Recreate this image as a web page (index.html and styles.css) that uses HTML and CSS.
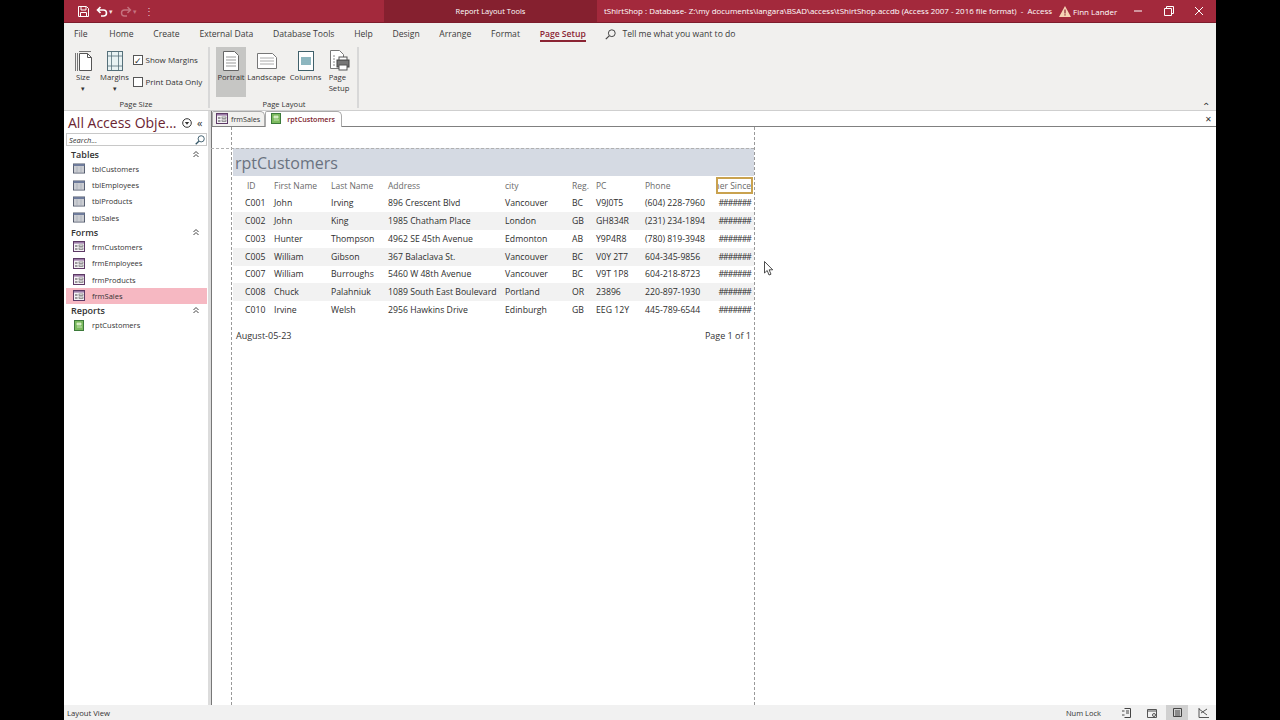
FILE: index.html
```html
<!DOCTYPE html>
<html lang="en">
<head>
<meta charset="UTF-8">
<title>tShirtShop : Database - Access</title>
<link rel="stylesheet" href="styles.css">
</head>
<body>

<svg class="defs" width="0" height="0">
    <symbol id="ico-table" viewBox="0 0 12 10">
        <rect x="0.5" y="0.5" width="11" height="9" fill="#fff" stroke="#50586a"/>
        <path d="M0 3.5h12M0 5.500h12M0 7.500h12" stroke="#6a7080" stroke-width="0.7"/>
        <path d="M4 3v7M8 3v7" stroke="#a0a6b4" stroke-width="0.6"/>
        <rect x="0.5" y="0.5" width="11" height="2" fill="#6f7c9c"/>
    </symbol>
    <symbol id="ico-form" viewBox="0 0 12 11">
        <rect x="0.5" y="0.5" width="11" height="10" fill="#f4f1f5" stroke="#5d3a66"/>
        <rect x="1" y="1" width="10" height="1.6" fill="#9a7aa6"/>
        <path d="M2 5h2.5M2 8h2.5" stroke="#444" stroke-width="1"/>
        <rect x="6" y="4" width="4" height="1.6" fill="#fff" stroke="#555" stroke-width="0.6"/>
        <rect x="6" y="7" width="4" height="1.6" fill="#fff" stroke="#555" stroke-width="0.6"/>
    </symbol>
    <symbol id="ico-report" viewBox="0 0 10 11">
        <rect x="0.5" y="0.5" width="9" height="10" fill="#7dbb5f" stroke="#3c7a3a"/>
        <path d="M3 3h4v2H3zM3 7h5" fill="#c9e7b4" stroke="#e2f2d5" stroke-width="0.7"/>
    </symbol>
    <symbol id="ico-collapse" viewBox="0 0 8 8">
        <path d="M1.5 4 4 1.5 6.5 4M1.5 7 4 4.5 6.5 7" fill="none" stroke="#444" stroke-width="1"/>
    </symbol>
</svg>

<div class="app">

    <div class="titlebar">
        <div class="quick">
            <svg class="q-save" width="11" height="11" viewBox="0 0 11 11"><path d="M.5.5h8l2 2v8H.5z" fill="none" stroke="#fff"/><path d="M3 1v3h5V1M2.5 10V6.5h6V10" fill="none" stroke="#fff"/></svg>
            <svg class="q-undo" width="12" height="11" viewBox="0 0 12 11"><path d="M4.5 1 1.5 4l3 3M2 4h5.5a3 3 0 0 1 0 6H5" fill="none" stroke="#fff" stroke-width="1.6"/></svg>
            <span class="q-caret">▾</span>
            <svg class="q-redo" width="12" height="11" viewBox="0 0 12 11"><path d="M7.5 1l3 3-3 3M10 4H4.5a3 3 0 0 0 0 6H7" fill="none" stroke="#c5737f" stroke-width="1.4"/></svg>
            <span class="q-caret q-dim">▾</span>
            <span class="q-more">⋮</span>
        </div>
        <div class="tools-title">Report Layout Tools</div>
        <div class="doc-title">tShirtShop : Database- Z:\my documents\langara\BSAD\access\tShirtShop.accdb (Access 2007 - 2016 file format)&nbsp; -&nbsp; Access</div>
        <div class="user">
            <svg width="12" height="11" viewBox="0 0 12 11"><path d="M6 0 12 11H0z" fill="#f6d3b5"/><path d="M6 3.5v4M6 8.3v1.3" stroke="#8b2433" stroke-width="1.2"/></svg>
            <span>Finn Lander</span>
        </div>
        <div class="win-btns">
            <svg width="10" height="10" viewBox="0 0 10 10"><path d="M1 5h8" stroke="#fff"/></svg>
            <svg width="10" height="10" viewBox="0 0 10 10"><path d="M.5 2.5h7v7h-7zM2.5 2.5v-2h7v7h-2" fill="none" stroke="#fff"/></svg>
            <svg width="10" height="10" viewBox="0 0 10 10"><path d="M1 1l8 8M9 1 1 9" stroke="#fff"/></svg>
        </div>
    </div>

    <div class="tabs">
        <span class="tab tab-file">File</span>
        <span class="tab">Home</span>
        <span class="tab">Create</span>
        <span class="tab">External Data</span>
        <span class="tab">Database Tools</span>
        <span class="tab">Help</span>
        <span class="tab">Design</span>
        <span class="tab">Arrange</span>
        <span class="tab">Format</span>
        <span class="tab active">Page Setup</span>
        <span class="tell">
            <svg width="11" height="11" viewBox="0 0 11 11"><circle cx="6.8" cy="4.2" r="3.4" fill="none" stroke="#444"/><path d="M4.2 6.8 .8 10.2" stroke="#444" stroke-width="1.2"/></svg>
            Tell me what you want to do
        </span>
    </div>

    <div class="ribbon">
        <div class="group group-size">
            <div class="group-body">
                <div class="big big-size">
                    <svg width="17" height="20" viewBox="0 0 17 20"><path d="M4.500 2.500h8l4 4v13h-12z" fill="#fff" stroke="#555"/><path d="M12.500 2.500v4h4" fill="none" stroke="#555"/><path d="M.5 2v18M2.500 2v18M4 .5h12" stroke="#555" stroke-width="0.8" fill="none"/></svg>
                    <span>Size</span>
                    <i class="caret">▾</i>
                </div>
                <div class="big big-margins">
                    <svg width="16" height="20" viewBox="0 0 16 20"><rect x="0.5" y="0.5" width="15" height="19" fill="#e8f2f3" stroke="#55707a"/><path d="M4.500 0v20M11.500 0v20M0 5h16M0 15h16" stroke="#55707a" stroke-width="0.8"/></svg>
                    <span>Margins</span>
                    <i class="caret">▾</i>
                </div>
                <div class="checks">
                    <label class="check"><b class="box on">✓</b>Show Margins</label>
                    <label class="check"><b class="box"></b>Print Data Only</label>
                </div>
            </div>
            <div class="group-label">Page Size</div>
        </div>
        <div class="group group-layout">
            <div class="group-body">
                <div class="big big-portrait selected">
                    <svg width="16" height="20" viewBox="0 0 16 20"><path d="M.5.5h11l4 4v15H.5z" fill="#fff" stroke="#666"/><path d="M3 6h10M3 9h10M3 12h10M3 15h10" stroke="#999"/></svg>
                    <span>Portrait</span>
                </div>
                <div class="big big-landscape">
                    <svg width="20" height="16" viewBox="0 0 20 16"><path d="M.5.5h15l4 4v11H.5z" fill="#fff" stroke="#777"/><path d="M3 5h14M3 8h14M3 11h14" stroke="#aaa"/></svg>
                    <span>Landscape</span>
                </div>
                <div class="big big-columns">
                    <svg width="16" height="20" viewBox="0 0 16 20"><rect x="0.5" y="0.5" width="15" height="19" fill="#fff" stroke="#40606a"/><path d="M3 7h10M3 9h10M3 11h10M3 13h10" stroke="#1c6f80"/></svg>
                    <span>Columns</span>
                </div>
                <div class="big big-setup">
                    <svg width="21" height="22" viewBox="0 0 21 22"><path d="M1.500.5h9l4 4v14h-13z" fill="#fff" stroke="#777"/><path d="M4 6h2M4 9h2M4 12h2M4 15h2" stroke="#888"/><rect x="8" y="10" width="12" height="7" fill="#777" stroke="#444"/><rect x="10" y="7" width="8" height="3" fill="#fff" stroke="#555"/><rect x="10" y="15" width="8" height="5" fill="#fff" stroke="#555"/></svg>
                    <span>Page<br>Setup</span>
                </div>
            </div>
            <div class="group-label">Page Layout</div>
        </div>
        <div class="ribbon-pin">⌃</div>
    </div>

    <div class="workspace">
        <nav class="nav">
            <div class="nav-head">
                <span class="nav-title">All Access Obje...</span>
                <svg width="10" height="10" viewBox="0 0 10 10"><circle cx="5" cy="5" r="4.3" fill="none" stroke="#333"/><path d="M2.8 4h4.400L5 6.700z" fill="#333"/></svg>
                <span class="nav-hide">«</span>
            </div>
            <div class="nav-search">
                <span>Search...</span>
                <svg width="10" height="10" viewBox="0 0 11 11"><circle cx="6.800" cy="4.200" r="3.400" fill="none" stroke="#356"/><path d="M4.200 6.800 .8 10.200" stroke="#356" stroke-width="1.400"/></svg>
            </div>
            <div class="nav-group">Tables<svg width="8" height="8"><use href="#ico-collapse"/></svg></div>
            <div class="nav-item"><svg class="ico-t"><use href="#ico-table"/></svg>tblCustomers</div>
            <div class="nav-item"><svg class="ico-t"><use href="#ico-table"/></svg>tblEmployees</div>
            <div class="nav-item"><svg class="ico-t"><use href="#ico-table"/></svg>tblProducts</div>
            <div class="nav-item"><svg class="ico-t"><use href="#ico-table"/></svg>tblSales</div>
            <div class="nav-group">Forms<svg width="8" height="8"><use href="#ico-collapse"/></svg></div>
            <div class="nav-item"><svg class="ico-t"><use href="#ico-form"/></svg>frmCustomers</div>
            <div class="nav-item"><svg class="ico-t"><use href="#ico-form"/></svg>frmEmployees</div>
            <div class="nav-item"><svg class="ico-t"><use href="#ico-form"/></svg>frmProducts</div>
            <div class="nav-item current"><svg class="ico-t"><use href="#ico-form"/></svg>frmSales</div>
            <div class="nav-group">Reports<svg width="8" height="8"><use href="#ico-collapse"/></svg></div>
            <div class="nav-item"><svg class="ico-t"><use href="#ico-report"/></svg>rptCustomers</div>
        </nav>

        <main class="main">
            <div class="doc-tabs">
                <div class="doc-tab"><svg class="ico-t"><use href="#ico-form"/></svg>frmSales</div>
                <div class="doc-tab open"><svg class="ico-t"><use href="#ico-report"/></svg>rptCustomers</div>
                <span class="doc-close">✕</span>
            </div>
            <div class="canvas">
                <div class="page">
                    <div class="rpt-title">rptCustomers</div>
                    <div class="row head">
                        <span class="c-id">ID</span><span class="c-first">First Name</span><span class="c-last">Last Name</span><span class="c-addr">Address</span><span class="c-city">city</span><span class="c-reg">Reg.</span><span class="c-pc">PC</span><span class="c-phone">Phone</span><span class="c-since picked"><em>Customer Since</em></span>
                    </div>
                    <div class="row">
                        <span class="c-id">C001</span><span class="c-first">John</span><span class="c-last">Irving</span><span class="c-addr">896 Crescent Blvd</span><span class="c-city">Vancouver</span><span class="c-reg">BC</span><span class="c-pc">V9J0T5</span><span class="c-phone">(604) 228-7960</span><span class="c-since">#######</span>
                    </div>
                    <div class="row">
                        <span class="c-id">C002</span><span class="c-first">John</span><span class="c-last">King</span><span class="c-addr">1985 Chatham Place</span><span class="c-city">London</span><span class="c-reg">GB</span><span class="c-pc">GH834R</span><span class="c-phone">(231) 234-1894</span><span class="c-since">#######</span>
                    </div>
                    <div class="row">
                        <span class="c-id">C003</span><span class="c-first">Hunter</span><span class="c-last">Thompson</span><span class="c-addr">4962 SE 45th Avenue</span><span class="c-city">Edmonton</span><span class="c-reg">AB</span><span class="c-pc">Y9P4R8</span><span class="c-phone">(780) 819-3948</span><span class="c-since">#######</span>
                    </div>
                    <div class="row">
                        <span class="c-id">C005</span><span class="c-first">William</span><span class="c-last">Gibson</span><span class="c-addr">367 Balaclava St.</span><span class="c-city">Vancouver</span><span class="c-reg">BC</span><span class="c-pc">V0Y 2T7</span><span class="c-phone">604-345-9856</span><span class="c-since">#######</span>
                    </div>
                    <div class="row">
                        <span class="c-id">C007</span><span class="c-first">William</span><span class="c-last">Burroughs</span><span class="c-addr">5460 W 48th Avenue</span><span class="c-city">Vancouver</span><span class="c-reg">BC</span><span class="c-pc">V9T 1P8</span><span class="c-phone">604-218-8723</span><span class="c-since">#######</span>
                    </div>
                    <div class="row">
                        <span class="c-id">C008</span><span class="c-first">Chuck</span><span class="c-last">Palahniuk</span><span class="c-addr">1089 South East Boulevard</span><span class="c-city">Portland</span><span class="c-reg">OR</span><span class="c-pc">23896</span><span class="c-phone">220-897-1930</span><span class="c-since">#######</span>
                    </div>
                    <div class="row">
                        <span class="c-id">C010</span><span class="c-first">Irvine</span><span class="c-last">Welsh</span><span class="c-addr">2956 Hawkins Drive</span><span class="c-city">Edinburgh</span><span class="c-reg">GB</span><span class="c-pc">EEG 12Y</span><span class="c-phone">445-789-6544</span><span class="c-since">#######</span>
                    </div>
                    <div class="rpt-foot">
                        <span>August-05-23</span>
                        <span>Page 1 of 1</span>
                    </div>
                </div>
                <svg class="cursor" width="10" height="15" viewBox="0 0 10 15"><path d="M.5.500v11.500l2.700-2.500 1.800 4.500 2-.8-1.900-4.400h3.600z" fill="#fff" stroke="#222" stroke-width="0.8"/></svg>
            </div>
        </main>
    </div>

    <div class="statusbar">
        <span>Layout View</span>
        <div class="status-right">
            <span class="numlock">Num Lock</span>
            <svg class="view" width="9" height="10" viewBox="0 0 9 10"><path d="M2.500.5h6v9h-6M0 3h2.500M0 7h2.500M4 3h3M4 5h3" fill="none" stroke="#444"/></svg>
            <svg class="view" width="11" height="10" viewBox="0 0 11 10"><path d="M.5 1.500h9v8h-9zM.5 3h9" fill="none" stroke="#555"/><circle cx="7" cy="7" r="1.500" fill="none" stroke="#555"/></svg>
            <span class="view-on"><svg width="9" height="9" viewBox="0 0 9 9"><path d="M.5.500h8v8h-8zM2 3h5M2 5h5M2 7h5" fill="none" stroke="#444"/></svg></span>
            <svg class="view view-last" width="11" height="10" viewBox="0 0 11 10"><path d="M1 0v9.500h10M1 1l8 6M3 5 9 1" fill="none" stroke="#555"/></svg>
        </div>
    </div>
</div>

</body>
</html>
```

FILE: styles.css
```css
* {
    box-sizing: border-box;
}

html, body {
    margin: 0;
    height: 100%;
    background: #000;
    overflow: hidden;
}

body {
    font-family: "Open Sans", "Noto Sans", sans-serif;
    font-size: 9px;
    color: #333;
}

.defs {
    position: absolute;
}

.app {
    width: 1152px;
    height: 720px;
    margin: 0 auto;
    background: #f1f0ee;
    display: flex;
    flex-direction: column;
}

/* title bar */
.titlebar {
    height: 23px;
    flex: none;
    display: flex;
    align-items: center;
    background: #a3293c;
    border-bottom: 1px solid #7d1c2c;
    color: #fff;
    padding-left: 14px;
}

.quick {
    width: 306px;
    display: flex;
    align-items: center;
}

.q-undo { margin-left: 7px; }
.q-redo { margin-left: 7px; }
.q-caret { font-size: 7px; margin-left: 1px; color: #f3dfe2; }
.q-dim { color: #c5737f; }
.q-more { margin-left: 7px; color: #e8c0c6; font-size: 10px; }

.tools-title {
    width: 213px;
    align-self: stretch;
    background: #85202f;
    display: flex;
    align-items: center;
    justify-content: center;
    font-size: 7.500px;
    margin-right: 7px;
}

.doc-title {
    width: 445px;
    font-size: 7.950px;
    white-space: nowrap;
}

.user {
    margin-left: 10px;
    width: 70px;
    display: flex;
    align-items: center;
    gap: 2px;
    font-size: 8px;
}

.win-btns {
    width: 80px;
    display: flex;
    justify-content: space-between;
    padding-right: 5px;
    padding-left: 4px;
}

/* ribbon tabs */
.tabs {
    height: 22px;
    flex: none;
    display: flex;
    align-items: center;
    gap: 19.700px;
    padding-left: 10px;
    font-size: 8.600px;
    color: #3a3a3a;
}

.tab {
    white-space: nowrap;
}

.tab-file {
    margin-right: 2px;
}

.tab.active {
    color: #8b2433;
    font-weight: 600;
    border-bottom: 2px solid #8b2433;
    line-height: 12px;
    margin-top: 2px;
}

.tell {
    display: flex;
    align-items: center;
    gap: 6px;
}

/* ribbon */
.ribbon {
    height: 66px;
    flex: none;
    display: flex;
    border-bottom: 1px solid #cfcfcf;
    position: relative;
}

.group {
    display: flex;
    flex-direction: column;
    border-right: 2px solid #d8d8d8;
    margin: 2px 0 2px;
}

.group-size { width: 146px; }
.group-layout { width: 149px; padding-left: 6px; }

.group-body {
    flex: 1;
    display: flex;
}

.group-label {
    height: 13px;
    text-align: center;
    font-size: 7.600px;
    line-height: 15px;
}

.group-layout .group-label {
    margin-right: 5px;
}

.big {
    display: flex;
    flex-direction: column;
    align-items: center;
    font-size: 7.700px;
    line-height: 11px;
    height: 50px;
    white-space: nowrap;
}

.big svg {
    height: 22px;
    margin-top: 3px;
    flex: none;
}

.caret {
    font-style: normal;
    font-size: 7px;
    line-height: 11px;
}

.big-size { width: 24px; margin-left: 7px; }
.big-margins { width: 32px; margin-left: 3.500px; }

.checks {
    display: flex;
    flex-direction: column;
    gap: 9px;
    padding: 6px 0 0 2px;
}

.check {
    display: flex;
    align-items: center;
    gap: 3px;
    font-size: 8px;
    height: 13px;
    white-space: nowrap;
}

.box {
    width: 10px;
    height: 10px;
    border: 1px solid #555;
    background: #fff;
    font-size: 9px;
    font-weight: 400;
    line-height: 9px;
    text-align: center;
}

.big-portrait { width: 30px; }
.big-landscape { width: 41px; }
.big-columns { width: 37px; }
.big-setup { width: 30px; }
.selected { background: #c6c6c4; }

.ribbon-pin {
    position: absolute;
    right: 6px;
    bottom: -3px;
    font-size: 10px;
}

/* navigation pane */
.workspace {
    flex: 1;
    min-height: 0;
    display: flex;
    background: #fff;
}

.nav {
    width: 147px;
    flex: none;
    background: #fff;
    border-right: 3px solid #dcdcdc;
    box-shadow: 1px 0 0 #777;
    padding: 1px 1px 0 2px;
}

.nav-head {
    height: 21px;
    display: flex;
    align-items: center;
    padding-left: 2px;
}

.nav-title {
    font-size: 14px;
    width: 114px;
    color: #6b2431;
    white-space: nowrap;
}

.nav-hide {
    margin-left: 5px;
    font-size: 11px;
}

.nav-search {
    height: 13px;
    display: flex;
    align-items: center;
    justify-content: space-between;
    border: 1px solid #c8c8c8;
    font-style: italic;
    font-size: 7.500px;
    padding: 0 1px 0 2px;
    margin-bottom: 1.600px;
}

.nav-group {
    height: 13px;
    display: flex;
    align-items: center;
    justify-content: space-between;
    padding: 0 7px 0 5px;
    font-weight: 600;
    font-size: 9px;
}

.nav-item {
    height: 16.300px;
    display: flex;
    align-items: center;
    gap: 7px;
    padding-left: 7px;
    font-size: 7.500px;
}

.ico-t {
    width: 12px;
    height: 11px;
    flex: none;
}

.nav-item.current {
    background: #f6b8c2;
}

/* document area */
.main {
    flex: 1;
    min-width: 0;
    display: flex;
    flex-direction: column;
}

.doc-tabs {
    height: 16px;
    flex: none;
    display: flex;
    align-items: flex-end;
    border-bottom: 1px solid #808080;
    padding-left: 1px;
    position: relative;
    font-size: 7.200px;
}

.doc-tab {
    height: 15px;
    display: flex;
    align-items: center;
    gap: 3px;
    padding: 0 4px 1px 3px;
    background: #f1f0ee;
    border: 1px solid #aaa;
    border-bottom: none;
    border-radius: 2px 5px 0 0;
}

.doc-tab.open {
    color: #7d1c2c;
    font-weight: 600;
    background: #fff;
    height: 16px;
    margin-bottom: -1px;
    gap: 5px;
    padding: 0 6px 2px 4px;
}

.doc-close {
    position: absolute;
    right: 4px;
    top: 2px;
    font-size: 8px;
}

.canvas {
    flex: 1;
    min-height: 0;
    padding-left: 20px;
    position: relative;
}

.page {
    width: 524px;
    height: 100%;
    padding-top: 21px;
    border-left: 1px dashed #999;
    border-right: 1px dashed #999;
    position: relative;
}

.page::before {
    content: "";
    position: absolute;
    left: -21px;
    right: 0;
    top: 21px;
    border-top: 1px dashed #b0b0b0;
}

.rpt-title {
    height: 28px;
    margin-left: 1px;
    padding-left: 2px;
    background: #d5dae3;
    color: #6a7280;
    font-size: 16px;
    line-height: 30px;
}

.row {
    height: 17.850px;
    display: flex;
    align-items: center;
    margin-left: 1px;
    font-size: 8.700px;
    color: #2e2e2e;
    white-space: nowrap;
}

.row:nth-of-type(even) {
    background: #f2f2f2;
}

.row.head {
    height: 18.200px;
    color: #6a6a6a;
    background: none;
    font-size: 8.500px;
}

.row span {
    display: block;
}

.c-id { width: 41px; padding-left: 12px; }
.c-first { width: 57px; }
.c-last { width: 57px; }
.c-addr { width: 117px; }
.c-city { width: 67px; }
.c-reg { width: 24px; }
.c-pc { width: 49px; }
.c-phone { width: 71px; }
.c-since {
    width: 37px;
    overflow: hidden;
    text-align: right;
    padding-right: 2px;
    font-size: 8.600px;
    letter-spacing: -0.900px;
}

.head .c-id { padding-left: 14px; }

.picked {
    height: 17px;
    border: 2px solid #c9a24f;
    padding-right: 0;
    font-size: 8.500px;
    letter-spacing: 0;
    display: flex !important;
    justify-content: flex-end;
    align-items: center;
}

.picked em {
    font-style: normal;
    flex: none;
}

.rpt-foot {
    display: flex;
    justify-content: space-between;
    padding: 10px 3px 0 4px;
    font-size: 9px;
}

.cursor {
    position: absolute;
    left: 553px;
    top: 134px;
}

/* status bar */
.statusbar {
    height: 15px;
    flex: none;
    display: flex;
    justify-content: space-between;
    align-items: center;
    background: #f1f1f1;
    padding-left: 3px;
    font-size: 7.700px;
}

.status-right {
    display: flex;
    align-items: center;
    height: 100%;
}

.numlock { margin-right: 21px; font-size: 7.500px; }
.view { margin-right: 16px; }
.view-last { margin-right: 7px; }

.view-on {
    width: 22px;
    height: 100%;
    background: #d0d0d0;
    display: flex;
    align-items: center;
    justify-content: center;
    margin: 0 10px 0 -8px;
}
```
